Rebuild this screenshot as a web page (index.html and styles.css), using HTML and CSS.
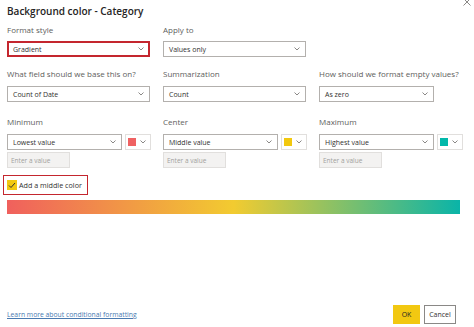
FILE: index.html
```html
<!DOCTYPE html>
<html>
<head>
<meta charset="utf-8">
<link rel="stylesheet" href="styles.css">
</head>
<body>
<div class="dialog">
  <button class="close" aria-label="Close">
    <svg width="8" height="8" viewBox="0 0 8 8"><path d="M0.5 0.5L7.5 7.5M7.5 0.5L0.5 7.5" stroke="#8a8886" stroke-width="1" fill="none"/></svg>
  </button>
  <h1 class="title">Background color - Category</h1>

  <div class="grid row1">
    <div class="field">
      <div class="label">Format style</div>
      <div class="select wide highlight"><span>Gradient</span><svg class="chev" width="6" height="4" viewBox="0 0 6 4"><path d="M0.5 0.5L3 3L5.5 0.5" stroke="#8a8886" fill="none"/></svg></div>
    </div>
    <div class="field">
      <div class="label">Apply to</div>
      <div class="select wide"><span>Values only</span><svg class="chev" width="6" height="4" viewBox="0 0 6 4"><path d="M0.5 0.5L3 3L5.5 0.5" stroke="#8a8886" fill="none"/></svg></div>
    </div>
  </div>

  <div class="grid row2">
    <div class="field">
      <div class="label">What field should we base this on?</div>
      <div class="select wide"><span>Count of Date</span><svg class="chev" width="6" height="4" viewBox="0 0 6 4"><path d="M0.5 0.5L3 3L5.5 0.5" stroke="#8a8886" fill="none"/></svg></div>
    </div>
    <div class="field">
      <div class="label">Summarization</div>
      <div class="select wide"><span>Count</span><svg class="chev" width="6" height="4" viewBox="0 0 6 4"><path d="M0.5 0.5L3 3L5.5 0.5" stroke="#8a8886" fill="none"/></svg></div>
    </div>
    <div class="field">
      <div class="label">How should we format empty values?</div>
      <div class="select narrow"><span>As zero</span><svg class="chev" width="6" height="4" viewBox="0 0 6 4"><path d="M0.5 0.5L3 3L5.5 0.5" stroke="#8a8886" fill="none"/></svg></div>
    </div>
  </div>

  <div class="grid row3">
    <div class="field">
      <div class="label">Minimum</div>
      <div class="pair">
        <div class="select narrow"><span>Lowest value</span><svg class="chev" width="6" height="4" viewBox="0 0 6 4"><path d="M0.5 0.5L3 3L5.5 0.5" stroke="#8a8886" fill="none"/></svg></div>
        <div class="swatch"><i class="chip red"></i><svg class="chev" width="6" height="4" viewBox="0 0 6 4"><path d="M0.5 0.5L3 3L5.5 0.5" stroke="#8a8886" fill="none"/></svg></div>
      </div>
      <div class="input">Enter a value</div>
    </div>
    <div class="field">
      <div class="label">Center</div>
      <div class="pair">
        <div class="select narrow"><span>Middle value</span><svg class="chev" width="6" height="4" viewBox="0 0 6 4"><path d="M0.5 0.5L3 3L5.5 0.5" stroke="#8a8886" fill="none"/></svg></div>
        <div class="swatch"><i class="chip yellow"></i><svg class="chev" width="6" height="4" viewBox="0 0 6 4"><path d="M0.5 0.5L3 3L5.5 0.5" stroke="#8a8886" fill="none"/></svg></div>
      </div>
      <div class="input">Enter a value</div>
    </div>
    <div class="field">
      <div class="label">Maximum</div>
      <div class="pair">
        <div class="select narrow"><span>Highest value</span><svg class="chev" width="6" height="4" viewBox="0 0 6 4"><path d="M0.5 0.5L3 3L5.5 0.5" stroke="#8a8886" fill="none"/></svg></div>
        <div class="swatch"><i class="chip teal"></i><svg class="chev" width="6" height="4" viewBox="0 0 6 4"><path d="M0.5 0.5L3 3L5.5 0.5" stroke="#8a8886" fill="none"/></svg></div>
      </div>
      <div class="input">Enter a value</div>
    </div>
  </div>

  <div class="check-row">
    <span class="checkbox"><svg width="8" height="7" viewBox="0 0 8 7"><path d="M1 3.5L3 5.5L7 1" stroke="#323130" stroke-width="1" fill="none"/></svg></span>
    <span class="check-label">Add a middle color</span>
  </div>

  <div class="gradient"></div>

  <div class="footer">
    <a class="link" href="#">Learn more about conditional formatting</a>
    <div class="buttons">
      <button class="btn primary">OK</button>
      <button class="btn">Cancel</button>
    </div>
  </div>
</div>
</body>
</html>
```

FILE: styles.css
```css
* { box-sizing: border-box; }
html, body { margin: 0; padding: 0; background: #fff; }
body {
  width: 474px;
  height: 327px;
  overflow: hidden;
  font-family: "Open Sans", "Noto Sans", sans-serif;
  color: #323130;
}
.dialog {
  position: relative;
  height: 327px;
  display: flex;
  flex-direction: column;
  padding: 0 0 3px 7px;
}
.close {
  position: absolute;
  right: 2px;
  top: -3px;
  width: 10px;
  height: 10px;
  padding: 0;
  border: 0;
  background: none;
  display: flex;
  align-items: center;
  justify-content: center;
}
.title {
  margin: 3px 0 0 0;
  font-size: 10px;
  line-height: 16px;
  font-weight: 600;
  color: #252423;
}
.grid {
  display: grid;
  grid-template-columns: 144px 144px 144px;
  column-gap: 12px;
}
.row1 { margin-top: 5px; }
.row2 { margin-top: 11px; }
.row3 { margin-top: 14px; }
.field { display: flex; flex-direction: column; }
.label {
  font-size: 8px;
  line-height: 12px;
  color: #605e5c;
  white-space: nowrap;
  margin-bottom: 5px;
}
.row2 .label, .row3 .label { margin-bottom: 6px; }
.select {
  height: 16px;
  border: 1px solid #b3b0ad;
  background: #fff;
  display: flex;
  align-items: center;
  justify-content: space-between;
  padding: 0 5px 0 5px;
  font-size: 7px;
  color: #323130;
  white-space: nowrap;
}
.select.wide { width: 143px; }
.select.narrow { width: 115px; }
.select.highlight { border: 2px solid #c4262e; padding-left: 4px; padding-right: 4px; }
.chev { flex: none; }
.pair { display: flex; gap: 3px; }
.swatch {
  width: 26px;
  height: 16px;
  border: 1px solid #e1dfdd;
  display: flex;
  align-items: center;
  justify-content: space-between;
  padding: 0 4px 0 2px;
}
.chip { display: block; width: 8px; height: 8px; }
.chip.red { background: #ef6262; }
.chip.yellow { background: #f2c80f; }
.chip.teal { background: #01b8aa; }
.input {
  margin-top: 2px;
  width: 63px;
  height: 16px;
  background: #f3f2f1;
  border: 1px solid #e1dfdd;
  font-size: 6.5px;
  color: #a19f9d;
  display: flex;
  align-items: center;
  padding-left: 3px;
  white-space: nowrap;
}
.check-row {
  margin: 7px 0 0 -4px;
  width: 85px;
  height: 20px;
  border: 1.5px solid #c4262e;
  display: flex;
  align-items: center;
  padding-left: 3px;
  gap: 2px;
}
.checkbox {
  flex: none;
  width: 10px;
  height: 10px;
  background: #f2c811;
  display: flex;
  align-items: center;
  justify-content: center;
}
.check-label { font-size: 7.2px; color: #323130; white-space: nowrap; }
.gradient {
  margin-top: 5px;
  width: 453px;
  height: 14px;
  background: linear-gradient(to right, #f0605d 0%, #f2cb30 50%, #0ab4a8 100%);
}
.footer {
  margin-top: auto;
  display: flex;
  align-items: center;
  justify-content: space-between;
  padding-right: 18px;
}
.link {
  font-size: 6.8px;
  color: #4a7ab0;
  text-decoration: underline;
}
.buttons { display: flex; gap: 4px; }
.btn {
  height: 19px;
  padding: 0;
  border: 1px solid #8a8886;
  background: #fff;
  font-family: inherit;
  font-size: 7px;
  color: #323130;
  width: 32px;
}
.btn.primary {
  width: 27px;
  background: #f2c811;
  border-color: #f2c811;
  color: #252423;
}
```
